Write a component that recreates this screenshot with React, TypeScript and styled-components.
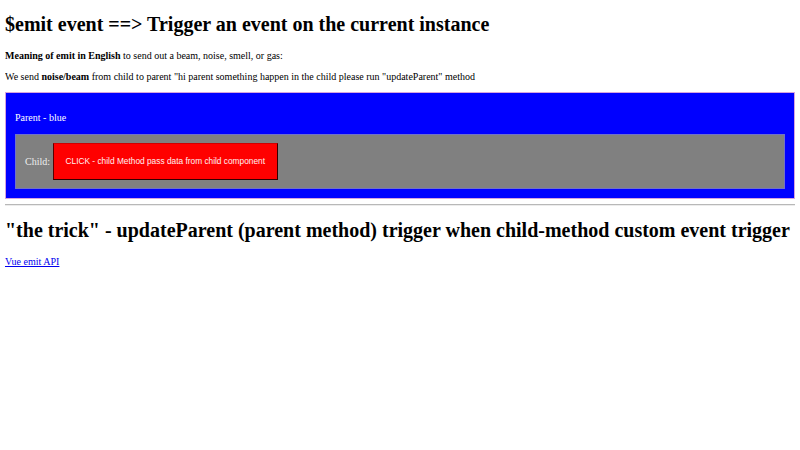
import styled, { createGlobalStyle } from "styled-components";

const GlobalStyle = createGlobalStyle`
  body {
    margin: 0 5px 5px;
    font-family: "Liberation Serif", "Times New Roman", serif;
    font-size: 10px;
    color: #000;
    background: #fff;
  }
`;

function Child() {
  return (
    <ChildBox>
      <ChildLabel>Child:</ChildLabel>
      <ClickButton>CLICK - child Method pass data from child component</ClickButton>
    </ChildBox>
  );
}

function Parent() {
  return (
    <ParentBox>
      <ParentLabel>Parent - blue</ParentLabel>
      <Child />
    </ParentBox>
  );
}

function App() {
  return (
    <Page>
      <GlobalStyle />
      <Title>$emit event ==&gt; Trigger an event on the current instance</Title>
      <Text>
        <b>Meaning of emit in English</b> to send out a beam, noise, smell, or gas:
      </Text>
      <Text>
        We send <b>noise/beam</b> from child to parent "hi parent something happen in the
        child please run "updateParent" method
      </Text>
      <Parent />
      <Divider />
      <Title>
        "the trick" - updateParent (parent method) trigger when child-method custom event
        trigger
      </Title>
      <Text>
        <Link href="#">Vue emit API</Link>
      </Text>
    </Page>
  );
}

const Page = styled.div`
  display: block;
`;

const Title = styled.h1`
  font-size: 20px;
  font-weight: 700;
  line-height: normal;
  margin: 13.4px 0;
  white-space: nowrap;
`;

const Text = styled.p`
  margin: 10px 0;
  line-height: normal;
`;

const ParentBox = styled.div`
  background: #0000ff;
  border: 1px solid #d6a3de;
  padding: 19px 9px 9px;
  display: flex;
  flex-direction: column;
  gap: 11px;
`;

const ParentLabel = styled.div`
  color: #fff;
  line-height: normal;
`;

const ChildBox = styled.div`
  background: #808080;
  border: 1px solid #7272c8;
  padding: 8px 9px;
  display: flex;
  align-items: center;
  gap: 2.5px;
`;

const ChildLabel = styled.span`
  color: #eeeeee;
  font-size: 10px;
`;

const ClickButton = styled.button`
  background: #ff0000;
  color: #fff0f0;
  font-family: "Liberation Sans", Arial, sans-serif;
  font-size: 8.33px;
  height: 37px;
  padding: 0 12px;
  border: 1px solid #5a0000;
  border-top-color: #d00000;
  border-right: 1.5px solid #300;
  border-bottom: 1.5px solid #300;
  cursor: pointer;
`;

const Divider = styled.hr`
  margin: 5px 0;
  border: none;
  border-top: 1px solid #b8b8b8;
  border-bottom: 1px solid #ececec;
`;

const Link = styled.a`
  color: #0000ee;
  text-decoration: underline;
`;

export default App;
